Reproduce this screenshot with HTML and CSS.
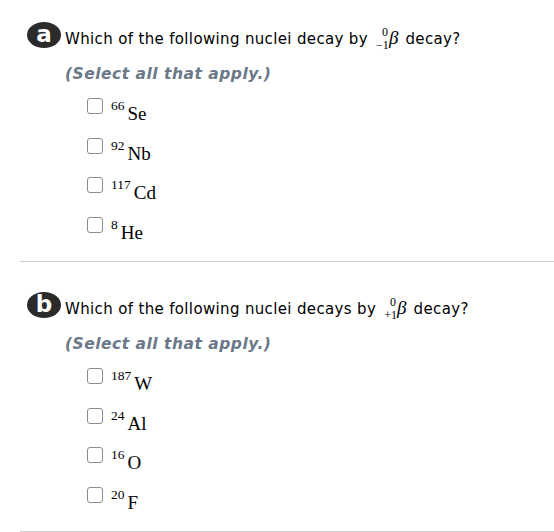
FILE: index.html
```html
<!DOCTYPE html>
<html>
<head>
<meta charset="utf-8">
<link rel="stylesheet" href="styles.css">
</head>
<body>
<div class="part part-a">
  <div class="question">
    <span class="badge">a</span>
    <span class="qtext">Which of the following nuclei decay by <span class="scripts"><span class="sup">0</span><span class="sub">&minus;1</span></span><span class="beta">β</span> decay?</span>
  </div>
  <div class="hint">(Select all that apply.)</div>
  <ul class="options">
    <li><span class="box"></span><span class="iso"><span class="mass">66</span>Se</span></li>
    <li><span class="box"></span><span class="iso"><span class="mass">92</span>Nb</span></li>
    <li><span class="box"></span><span class="iso"><span class="mass">117</span>Cd</span></li>
    <li><span class="box"></span><span class="iso"><span class="mass">8</span>He</span></li>
  </ul>
</div>
<div class="part part-b">
  <div class="question">
    <span class="badge">b</span>
    <span class="qtext">Which of the following nuclei decays by <span class="scripts"><span class="sup">0</span><span class="sub">+1</span></span><span class="beta">β</span> decay?</span>
  </div>
  <div class="hint">(Select all that apply.)</div>
  <ul class="options">
    <li><span class="box"></span><span class="iso"><span class="mass">187</span>W</span></li>
    <li><span class="box"></span><span class="iso"><span class="mass">24</span>Al</span></li>
    <li><span class="box"></span><span class="iso"><span class="mass">16</span>O</span></li>
    <li><span class="box"></span><span class="iso"><span class="mass">20</span>F</span></li>
  </ul>
</div>
</body>
</html>
```
FILE: styles.css
```css
body {
  margin: 0;
  background: #ffffff;
  font-family: "DejaVu Sans", Verdana, sans-serif;
  color: #000;
}
.part {
  box-sizing: border-box;
  margin-left: 20px;
  border-bottom: 1px solid #cccccc;
  padding-left: 7px;
}
.part-a {
  padding-top: 22px;
  height: 262px;
}
.part-b {
  padding-top: 30px;
  height: 270px;
}
.question {
  display: flex;
  align-items: flex-start;
  gap: 4px;
  height: 26px;
}
.badge {
  flex: none;
  width: 34px;
  height: 26px;
  border-radius: 50%;
  background: #2b2b2b;
  color: #fff;
  font-family: "DejaVu Sans", sans-serif;
  font-weight: bold;
  font-size: 23px;
  line-height: 25px;
  text-align: center;
}
.qtext {
  font-size: 15px;
  letter-spacing: 0.35px;
  line-height: 22px;
  margin-top: 3.5px;
  white-space: nowrap;
}
.scripts {
  display: inline-block;
  vertical-align: -5px;
  margin-left: 3px;
  font-family: "Liberation Serif", serif;
  font-size: 12px;
  line-height: 13px;
  letter-spacing: 0;
  text-align: center;
}
.sup, .sub {
  display: block;
}
.sup {
  text-align: right;
  padding-right: 1px;
}
.beta {
  font-family: "Liberation Serif", serif;
  font-style: italic;
  font-size: 19px;
  line-height: 19px;
  letter-spacing: 0;
  margin-right: 2px;
}
.hint {
  margin-top: 16px;
  margin-left: 38px;
  font-size: 15.5px;
  letter-spacing: 0.5px;
  font-weight: bold;
  font-style: italic;
  color: #6b7888;
  line-height: 20px;
  height: 20px;
}
.options {
  list-style: none;
  margin: 14px 0 0 0;
  padding: 0 0 0 60px;
}
.options li {
  display: flex;
  align-items: flex-start;
  height: 39.5px;
}
.box {
  flex: none;
  width: 14px;
  height: 14px;
  border: 1px solid #8c8c8c;
  border-radius: 3px;
  margin-right: 8px;
}
.iso {
  font-family: "Liberation Serif", serif;
  font-size: 19px;
  line-height: 19px;
  margin-top: 6px;
}
.mass {
  font-size: 13.5px;
  line-height: 0;
  vertical-align: 10px;
  margin-right: 3px;
}
```
